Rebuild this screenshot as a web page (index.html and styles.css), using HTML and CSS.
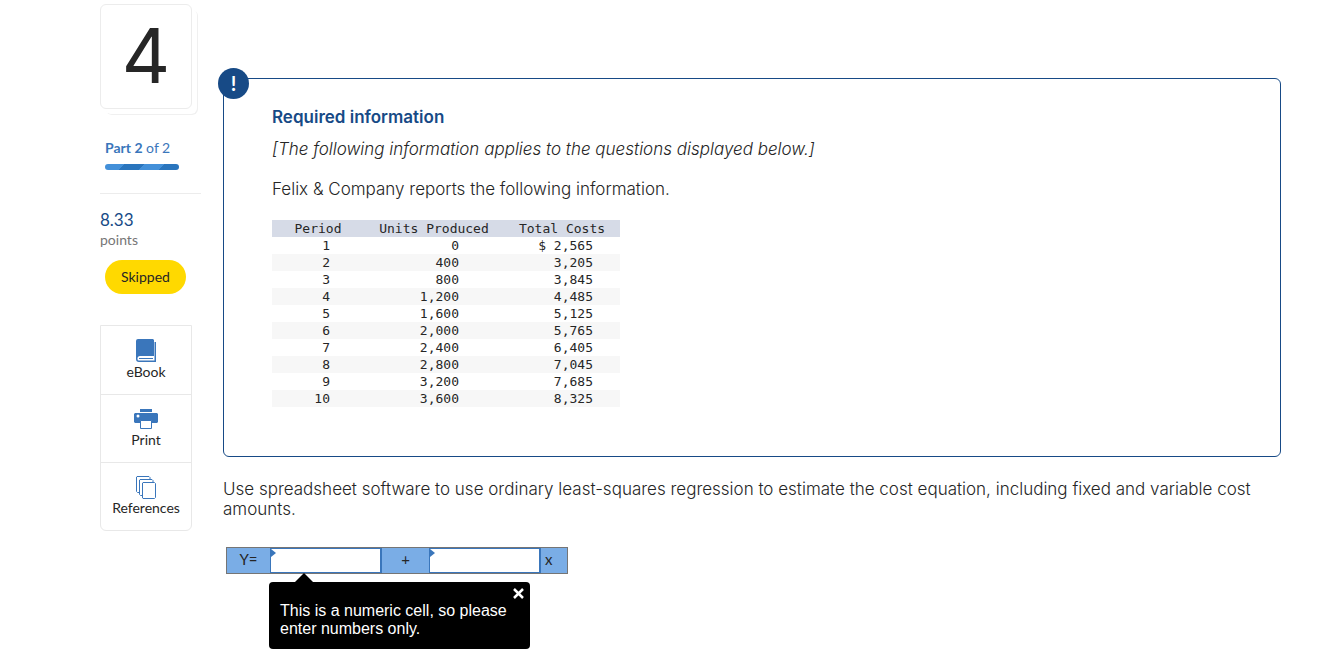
FILE: index.html
```html
<!DOCTYPE html>
<html lang="en">

<head>
    <meta charset="UTF-8">
    <meta name="viewport" content="width=device-width, initial-scale=1.0">
    <title>Question 4</title>
    <link rel="stylesheet" href="styles.css">
</head>

<body>
    <aside class="sidebar">
        <div class="question-number">4</div>
        <div class="part">
            <p class="part-label"><b>Part 2</b> of 2</p>
            <div class="part-bar"></div>
        </div>
        <div class="score">
            <p class="score-value">8.33</p>
            <p class="score-unit">points</p>
        </div>
        <span class="status">Skipped</span>
        <nav class="tools">
            <a class="tool" href="#ebook">
                <svg width="20" height="24" viewBox="0 0 20 24">
                    <path d="M2 0h15l1 1v16H4a2.500 2.500 0 0 0-2.500 2.500V20a1.500 1.500 0 0 0 1.500 1.500h15.500V3H20v20H3a3 3 0 0 1-3-3V2a2 2 0 0 1 2-2z" fill="#3a76bb"/>
                    <path d="M3 19.500h14" fill="none" stroke="#3a76bb"/>
                </svg>
                <span>eBook</span>
            </a>
            <a class="tool" href="#print">
                <svg width="24" height="22" viewBox="0 0 24 22">
                    <path d="M6 0h12v3H6zM1 4h22l1 1v8l-1 1H1l-1-1V5z" fill="#3a76bb"/>
                    <circle cx="4" cy="7" r="1.500" fill="#fff"/>
                    <path d="M6.500 11.500h11v8h-11z" fill="#fff" stroke="#3a76bb"/>
                </svg>
                <span>Print</span>
            </a>
            <a class="tool" href="#references">
                <svg width="20" height="23" viewBox="0 0 20 23">
                    <g fill="#fff" stroke="#3a76bb">
                        <path d="M1 .5h12l1 1v15H1.500l-1-1V1z"/>
                        <path d="M4 3.500h12l1 1v15H4.500l-1-1V4z"/>
                        <path d="M7 6.500h11.500l1 1v14l-1 1H7l-.5-.5V7z"/>
                    </g>
                </svg>
                <span>References</span>
            </a>
        </nav>
    </aside>
    <main class="content">
        <section class="info-box">
            <span class="info-badge">!</span>
            <h1>Required information</h1>
            <p class="info-note">[The following information applies to the questions displayed below.]</p>
            <p class="info-lead">Felix &amp; Company reports the following information.</p>
            <table class="data">
                <thead>
                    <tr><th class="period">Period</th><th class="units">Units Produced</th><th class="costs">Total Costs</th></tr>
                </thead>
                <tbody>
                    <tr><td>1</td><td>0</td><td>$ 2,565</td></tr>
                    <tr><td>2</td><td>400</td><td>3,205</td></tr>
                    <tr><td>3</td><td>800</td><td>3,845</td></tr>
                    <tr><td>4</td><td>1,200</td><td>4,485</td></tr>
                    <tr><td>5</td><td>1,600</td><td>5,125</td></tr>
                    <tr><td>6</td><td>2,000</td><td>5,765</td></tr>
                    <tr><td>7</td><td>2,400</td><td>6,405</td></tr>
                    <tr><td>8</td><td>2,800</td><td>7,045</td></tr>
                    <tr><td>9</td><td>3,200</td><td>7,685</td></tr>
                    <tr><td>10</td><td>3,600</td><td>8,325</td></tr>
                </tbody>
            </table>
        </section>
        <p class="question">Use spreadsheet software to use ordinary least-squares regression to estimate the cost equation, including fixed and variable cost amounts.</p>
        <form class="equation">
            <label class="eq-y" for="fixed">Y=</label>
            <div class="eq-cell">
                <input type="text" id="fixed" name="fixed" inputmode="decimal">
                <div class="tooltip">
                    <button class="tooltip-close" type="button" aria-label="Close">
                        <svg width="11" height="11" viewBox="0 0 11 11"><path d="M1 1l9 9M10 1l-9 9" stroke="#fff" stroke-width="2.500"/></svg>
                    </button>
                    <p>This is a numeric cell, so please enter numbers only.</p>
                </div>
            </div>
            <span class="eq-plus">+</span>
            <div class="eq-cell">
                <input type="text" id="variable" name="variable" inputmode="decimal">
            </div>
            <label class="eq-x" for="variable">x</label>
        </form>
    </main>
</body>

</html>
```

FILE: styles.css
```css
* {
    box-sizing: border-box;
}

body {
    min-height: 100vh;
    margin: 0;
    padding: 4px 46px 20px 100px;
    display: flex;
    align-items: flex-start;
    gap: 22px;
    font-family: Inter, "Liberation Sans", sans-serif;
    font-size: 17px;
    font-weight: 300;
    line-height: 20px;
    color: #262626;
    background-color: white;
}

p, h1 {
    margin: 0;
}

.sidebar {
    flex: none;
    width: 101px;
    font-family: Lato, "Liberation Sans", sans-serif;
    font-size: 14px;
    font-weight: 400;
}

.question-number {
    width: 92px;
    height: 105px;
    border: 1px solid #ececec;
    border-radius: 6px;
    background-color: white;
    box-shadow: 5px 5px 0 0 white, 6px 6px 0 0 #f0f0f0;
    font-family: Inter, sans-serif;
    font-size: 75px;
    line-height: 102px;
    text-align: center;
}

.part {
    padding: 29px 5px 23px;
    border-bottom: 1px solid #ececec;
}

.part-label {
    color: #3a76bb;
}

.part-bar {
    width: 74px;
    height: 6px;
    margin-top: 6px;
    border-radius: 3px;
    background: linear-gradient(135deg, #4390d9 25%, #2a75bd 25% 50%, #4390d9 50% 75%, #2a75bd 75%);
}

.score {
    padding-top: 16px;
}

.score-value {
    font-size: 17px;
    color: #174a86;
}

.score-unit {
    color: #767676;
}

.status {
    display: block;
    width: fit-content;
    margin: 10px 5px 31px;
    padding: 7px 16px;
    border-radius: 17px;
    background-color: #ffd900;
}

.tools {
    width: 92px;
    border: 1px solid #e8e8e8;
    border-radius: 0 0 6px 6px;
}

.tool {
    display: flex;
    flex-direction: column;
    align-items: center;
    justify-content: flex-end;
    height: 68px;
    padding-bottom: 13px;
    line-height: 18px;
    color: #262626;
    text-decoration: none;
}

.tool + .tool {
    border-top: 1px solid #e8e8e8;
}

.content {
    flex: 1;
    padding-top: 74px;
}

.info-box {
    position: relative;
    padding: 28px 48px 49px;
    border: 1px solid #174a86;
    border-radius: 6px;
}

.info-badge {
    position: absolute;
    top: -11px;
    left: -6px;
    width: 31px;
    height: 31px;
    border-radius: 50%;
    background-color: #174a86;
    color: white;
    font-family: Lato, sans-serif;
    font-size: 20px;
    font-weight: bold;
    line-height: 30px;
    text-align: center;
}

.info-box h1 {
    font-size: 17px;
    font-weight: 600;
    line-height: 20px;
    color: #174a86;
}

.info-note {
    margin-top: 12px;
    font-style: italic;
}

.info-lead {
    margin-top: 20px;
}

.data {
    margin-top: 21px;
    border-collapse: collapse;
    font-family: "DejaVu Sans Mono", monospace;
    font-size: 13px;
    line-height: 17px;
}

.data th, .data td {
    padding: 0;
    font-weight: normal;
}

.data thead {
    background-color: #d6dbe7;
}

.data tbody tr:nth-child(even) {
    background-color: #f7f7f7;
}

.period {
    width: 92px;
}

.units {
    width: 140px;
}

.costs {
    width: 116px;
}

.data td {
    padding-right: 34px;
    text-align: right;
}

.data td:nth-child(2) {
    padding-right: 45px;
}

.data td:nth-child(3) {
    padding-right: 27px;
}

.question {
    margin-top: 22px;
}

.equation {
    display: flex;
    width: fit-content;
    height: 27px;
    margin: 28px 3px 0;
    border: 1px solid #757575;
    background-color: #7aade6;
    font-family: Lato, sans-serif;
    font-size: 15px;
    font-weight: 400;
    line-height: 23px;
}

.eq-y, .eq-plus {
    width: 43px;
    text-align: center;
}

.eq-plus {
    width: 47px;
}

.eq-x {
    width: 26px;
    padding-left: 4px;
}

.eq-cell {
    position: relative;
    width: 112px;
}

.eq-cell::before {
    content: "";
    position: absolute;
    top: 1px;
    left: 1px;
    border: 4px solid transparent;
    border-left: 5px solid #3a76bb;
    border-right: 0;
}

.eq-cell input {
    display: block;
    width: 100%;
    height: 25px;
    padding: 0 8px;
    border: 1px solid #3a76bb;
    border-width: 1px 2px 1px 1px;
    border-radius: 0;
    outline: none;
    background-color: white;
    font: inherit;
}

.tooltip {
    position: absolute;
    top: 34px;
    left: -1px;
    width: 261px;
    padding: 20px 11px 11px;
    border-radius: 4px;
    background-color: black;
    color: white;
    font-family: "Liberation Sans", Arial, sans-serif;
    font-size: 16px;
    font-weight: 400;
    line-height: 18px;
}

.tooltip::before {
    content: "";
    position: absolute;
    top: -9px;
    left: 26px;
    border: 9px solid transparent;
    border-bottom-color: black;
    border-top: 0;
}

.tooltip-close {
    position: absolute;
    top: 6px;
    right: 6px;
    display: flex;
    padding: 0;
    border: 0;
    background: none;
}
```
